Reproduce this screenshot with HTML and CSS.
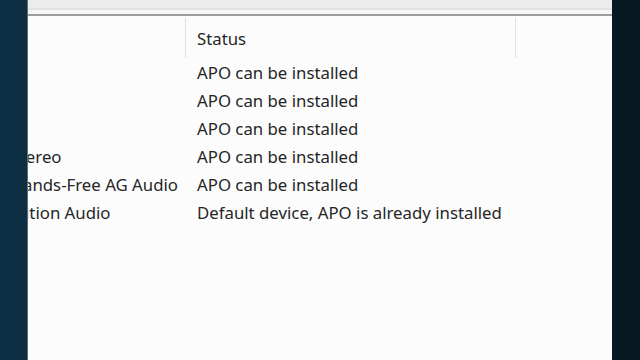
FILE: index.html
```html
<!DOCTYPE html>
<html>
<head>
    <meta charset="UTF-8">
    <title>Equalizer APO - Device selector</title>
    <link rel="stylesheet" href="styles.css">
</head>
<body>
    <div class="stage">
        <div class="window">
            <div class="toolbar"></div>
            <div class="list">
                <div class="head">
                    <div class="col first"></div>
                    <div class="col status">Status</div>
                    <div class="col rest"></div>
                </div>
                <div class="row">
                    <div class="col first"></div>
                    <div class="col status">APO can be installed</div>
                </div>
                <div class="row">
                    <div class="col first"></div>
                    <div class="col status">APO can be installed</div>
                </div>
                <div class="row">
                    <div class="col first"></div>
                    <div class="col status">APO can be installed</div>
                </div>
                <div class="row">
                    <div class="col first">Headset Stereo</div>
                    <div class="col status">APO can be installed</div>
                </div>
                <div class="row">
                    <div class="col first">Headset Hands-Free AG Audio</div>
                    <div class="col status">APO can be installed</div>
                </div>
                <div class="row">
                    <div class="col first">High Definition Audio</div>
                    <div class="col status">Default device, APO is already installed</div>
                </div>
            </div>
        </div>
    </div>
</body>
</html>
```

FILE: styles.css
```css
body {
    margin: 0;
    width: 640px;
    height: 360px;
    overflow: hidden;
    background: linear-gradient(90deg, #0d2f44 0%, #0a2433 60%, #051820 100%);
    font-family: 'Noto Sans', 'Open Sans', sans-serif;
}
.stage {
    display: flex;
    height: 360px;
}
.window {
    margin-left: 27px;
    width: 585px;
    height: 360px;
    overflow: hidden;
    background: #fcfcfc;
    border-left: 1px solid #5d6f78;
    box-sizing: border-box;
}
.toolbar {
    height: 14px;
    background: linear-gradient(180deg, #ececec 0, #ececec 8px, #e2e2e2 8px, #e2e2e2 10px, #f6f6f6 10px);
    border-bottom: 2px solid #9c9c9c;
}
.list {
    margin-left: -87px;
    padding-top: 1px;
    color: #262626;
    font-size: 16.8px;
}
.head, .row {
    display: grid;
    grid-template-columns: 245px 330px 1fr;
}
.head {
    height: 42px;
    align-items: center;
}
.head .col {
    height: 40px;
    line-height: 42px;
    box-sizing: border-box;
}
.head .first {
    border-right: 1px solid #dddddd;
}
.head .status {
    border-right: 1px solid #e2e2e2;
    padding-left: 11px;
}
.row {
    height: 28px;
    line-height: 28px;
    white-space: nowrap;
}
.row .status {
    padding-left: 11px;
}
.row .first {
    overflow: hidden;
}
```
